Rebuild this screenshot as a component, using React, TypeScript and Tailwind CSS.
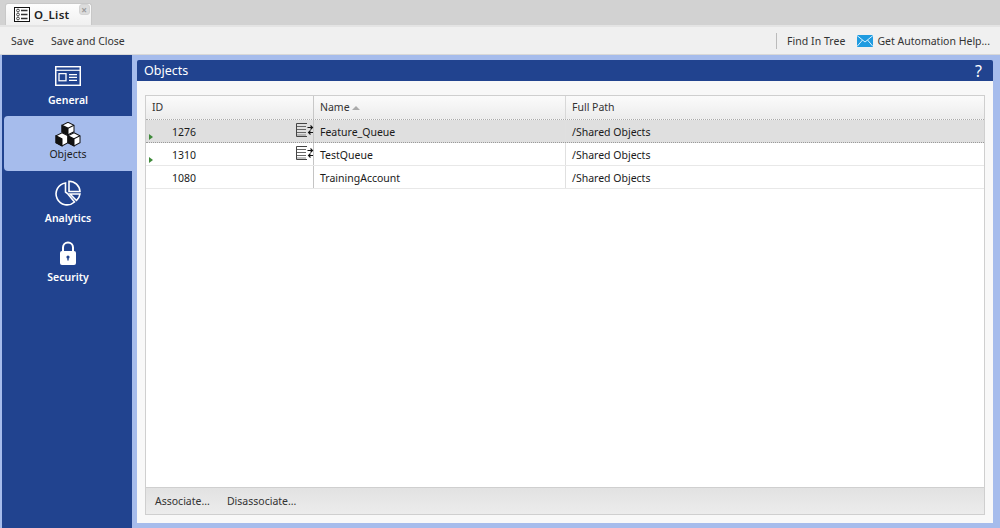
import React from "react";

function RowIcon() {
  return (
    <svg width="18" height="15" viewBox="0 0 18 15" className="shrink-0">
      <path d="M11 0.5H0.5V13.5H11" fill="none" stroke="#444" />
      <path d="M1 3.5H10M1 6.5H10M1 9.5H10" stroke="#666" strokeWidth="1" />
      <path d="M1 12H10" stroke="#888" strokeWidth="1" />
      <path d="M11.5 4.5H16.5M14.5 2.5L16.5 4.5L14.5 6.5" fill="none" stroke="#111" strokeWidth="1.1" />
      <path d="M17 9.5H12.5M14.5 7.5L12.5 9.5L14.5 11.5" fill="none" stroke="#111" strokeWidth="1.1" />
    </svg>
  );
}

function Row({ id, name, icon, selected }: { id: string; name: string; icon?: boolean; selected?: boolean }) {
  return (
    <div className={`flex h-[23px] text-[10.5px] text-[#1a1a1a] ${selected ? "bg-[#dfdfdf] border-b border-dotted border-[#999]" : "bg-white border-b border-[#e8e8e8]"}`}>
      <div className="relative flex w-[168px] items-center border-r border-[#c4c4c4] pl-[26px] pt-[4px]">
        {icon && <span className="absolute left-[3px] top-[14px] h-0 w-0 border-y-[3.5px] border-l-[4px] border-y-transparent border-l-[#3f8a3a]" />}
        <span className="flex-1">{id}</span>
        {icon && <span className="absolute right-[-1px] top-[3px]"><RowIcon /></span>}
      </div>
      <div className="flex w-[252px] items-center border-r border-[#e0e0e0] pl-[6px] pt-[4px]">{name}</div>
      <div className="flex flex-1 items-center pl-[6px] pt-[4px]">/Shared Objects</div>
    </div>
  );
}

function NavItem({ label, icon, active, h, bold = true }: { label: string; icon: React.ReactNode; active?: boolean; h: string; bold?: boolean }) {
  return (
    <div className={`flex w-full flex-col items-center ${h} ${active ? "rounded-l-[4px] bg-[#a6bcec] text-[#1c1c1c]" : "text-white"}`}>
      {icon}
      <span className={`text-[10.5px] leading-[14px] ${bold ? "font-semibold" : ""}`}>{label}</span>
    </div>
  );
}

export default function App() {
  return (
    <div className="flex h-[528px] w-[1000px] flex-col overflow-hidden bg-[#a6bcec] font-['Noto_Sans','Open_Sans',sans-serif]">
      <div className="flex h-[25px] items-end bg-[#d2d2d2] pl-[5px]">
        <div className="flex h-[22px] w-[87px] items-center rounded-t-[3px] border border-b-0 border-[#c8c8c8] bg-gradient-to-b from-[#fdfdfd] to-[#f0f0f0] pl-[8px]">
          <svg width="16" height="15" viewBox="0 0 16 15" className="shrink-0">
            <rect x="0.5" y="0.5" width="15" height="14" fill="white" stroke="#111" />
            <path d="M7 3.5H13.5M7 7.5H13.5M7 11.5H13.5" stroke="#333" strokeWidth="1.4" />
            <circle cx="4" cy="3.5" r="1.4" fill="none" stroke="#444" />
            <circle cx="4" cy="7.5" r="1.4" fill="none" stroke="#444" />
            <circle cx="4" cy="11.5" r="1.4" fill="none" stroke="#444" />
          </svg>
          <span className="ml-[4px] text-[11.5px] font-semibold tracking-[0.3px] text-[#222]">O_List</span>
          <span className="relative top-[-5px] ml-[9px] flex h-[11px] w-[11px] items-center justify-center rounded-[3px] border border-[#d4d4d4] bg-[#dcdcdc] text-[10px] leading-none font-bold text-[#9a9a9a]">×</span>
        </div>
      </div>
      <div className="h-[2px] bg-[#e4e4e4]" />
      <div className="flex h-[28px] items-center border-b border-[#d8d8d8] bg-[#f0f0f0] text-[10.5px] text-[#333]">
        <span className="ml-[11px] pt-[2px]">Save</span>
        <span className="ml-[17px] pt-[2px]">Save and Close</span>
        <div className="flex-1" />
        <div className="h-[16px] w-px bg-[#bbb]" />
        <span className="ml-[10px] pt-[2px] tracking-[0.05px]">Find In Tree</span>
        <svg width="16" height="12" viewBox="0 0 16 12" className="ml-[12px]">
          <rect width="16" height="12" fill="#1f9be0" />
          <path d="M0 0.5L8 7L16 0.5M0 11.5L5.5 5M16 11.5L10.5 5" fill="none" stroke="#d8f0ff" strokeWidth="1" />
        </svg>
        <span className="ml-[4px] mr-[10px] pt-[2px]">Get Automation Help...</span>
      </div>
      <div className="flex flex-1 pb-[5px] pl-[2px] pr-[7px]">
        <div className="mb-[-5px] flex w-[130px] flex-col bg-[#21438f] pl-[2px] pt-[7px]">
          <NavItem
            label="General"
            h="h-[54px]"
            icon={
              <svg width="26" height="20" viewBox="0 0 26 21" preserveAspectRatio="none" className="mt-[4px] mb-[7px]" fill="none" stroke="#fff">
                <rect x="0.75" y="0.75" width="24.5" height="19.5" strokeWidth="1.5" />
                <path d="M1 4.5H25" strokeWidth="1.2" />
                <rect x="4" y="8" width="7" height="7.5" strokeWidth="1.3" />
                <path d="M14 9H22M14 12H22M14 15H22" strokeWidth="1.3" />
              </svg>
            }
          />
          <NavItem
            active
            bold={false}
            label="Objects"
            h="h-[55px]"
            icon={
              <svg width="26" height="25" viewBox="0 0.5 26 23" preserveAspectRatio="none" className="mt-[6px] mb-[0px]" stroke="#111" strokeWidth="1">
                <path d="M13 0.8L19 3.5V9.5L13 12.2L7 9.5V3.5Z" fill="#fff" />
                <path d="M7 3.5L13 6.2V12.2L7 9.5Z" fill="#111" />
                <path d="M13 6.2L19 3.5" fill="none" />
                <path d="M7 10.5L13 13.2V19.5L7 22.5L1 19.5V13.2Z" fill="#fff" />
                <path d="M1 13.2L7 16V22.5L1 19.5Z" fill="#111" />
                <path d="M19 10.5L25 13.2V19.5L19 22.5L13 19.5V13.2Z" fill="#fff" />
                <path d="M13 13.2L19 16V22.5L13 19.5Z" fill="#111" />
                <path d="M19 16L25 13.2" fill="none" />
              </svg>
            }
          />
          <NavItem
            label="Analytics"
            h="h-[59px]"
            icon={
              <svg width="26" height="26" viewBox="0 0 26 26" className="mt-[9px] mb-[5px]" fill="none" stroke="#fff" strokeWidth="1.6">
                <path d="M10.5 3A11 11 0 1 0 19.5 22L12.5 13.5L10.5 12Z" />
                <path d="M14 1.2A11 11 0 0 1 25 11.5H14Z" />
                <path d="M15 14H25A11 11 0 0 1 21.5 20.5Z" />
              </svg>
            }
          />
          <NavItem
            label="Security"
            h="h-[60px]"
            icon={
              <svg width="18" height="25" viewBox="0 0 18 25" className="mt-[11px] mb-[4px]">
                <path d="M4 11V6.5a5 5 0 0 1 10 0V11" fill="none" stroke="#fff" strokeWidth="2" />
                <rect x="1" y="10" width="16" height="14" rx="2" fill="#fff" />
                <circle cx="9" cy="16" r="1.6" fill="#21438f" />
                <rect x="8.3" y="16" width="1.4" height="3.5" fill="#21438f" />
              </svg>
            }
          />
        </div>
        <div className="ml-[5px] mt-[5px] flex min-w-0 flex-1 flex-col">
          <div className="flex h-[21px] items-center justify-between rounded-t-[2px] bg-[#21438f] pl-[7px] pr-[11px] text-white">
            <span className="pt-[2px] text-[12.5px]">Objects</span>
            <span className="text-[16px] leading-none">?</span>
          </div>
          <div className="flex flex-1 flex-col bg-[#f8f8f8] px-[8px] pb-[8px] pt-[14px]">
            <div className="flex flex-1 flex-col border border-[#cfcfcf] bg-white">
              <div className="flex h-[24px] border-b border-dotted border-[#aaa] bg-gradient-to-b from-[#fbfbfb] to-[#ececec] text-[10.5px] text-[#333]">
                <div className="flex w-[168px] items-center border-r border-[#c8c8c8] pl-[6px]">ID</div>
                <div className="flex w-[252px] items-center border-r border-[#d8d8d8] pl-[6px]">
                  Name
                  <span className="ml-[2px] h-0 w-0 border-x-[4px] border-b-[4px] border-x-transparent border-b-[#aaa]" />
                </div>
                <div className="flex flex-1 items-center pl-[6px]">Full Path</div>
              </div>
              <Row id="1276" name="Feature_Queue" icon selected />
              <Row id="1310" name="TestQueue" icon />
              <Row id="1080" name="TrainingAccount" />
              <div className="flex-1" />
              <div className="flex h-[27px] items-center border-t border-[#cfcfcf] bg-gradient-to-b from-[#e2e2e2] to-[#ececec] pt-[2px] text-[10.5px] text-[#333]">
                <span className="ml-[9px]">Associate...</span>
                <span className="ml-[17px]">Disassociate...</span>
              </div>
            </div>
          </div>
        </div>
      </div>
    </div>
  );
}
